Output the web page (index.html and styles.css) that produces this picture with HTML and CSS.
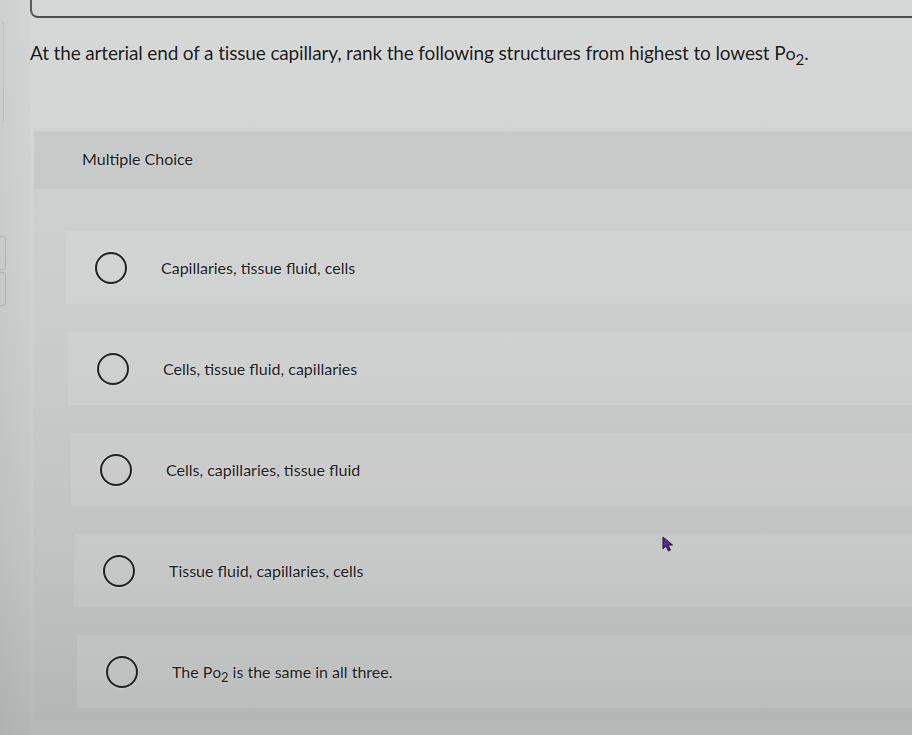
FILE: index.html
```html
<!DOCTYPE html>
<html lang="en">
<head>
<meta charset="utf-8">
<title>Multiple Choice</title>
<link rel="stylesheet" href="styles.css">
</head>
<body>
<div class="screen">
  <div class="side">
    <span class="side-line"></span>
    <span class="side-box"></span>
    <span class="side-box"></span>
  </div>
  <main class="content">
    <div class="topbox"></div>
    <p class="question">At the arterial end of a tissue capillary, rank the following structures from highest to lowest P<span class="po">o</span><sub>2</sub>.</p>
    <section class="panel">
      <div class="panel-head">Multiple Choice</div>
      <div class="options">
        <label class="option o1"><span class="radio"></span><span class="opt-text">Capillaries, tissue fluid, cells</span></label>
        <label class="option o2"><span class="radio"></span><span class="opt-text">Cells, tissue fluid, capillaries</span></label>
        <label class="option o3"><span class="radio"></span><span class="opt-text">Cells, capillaries, tissue fluid</span></label>
        <label class="option o4"><span class="radio"></span><span class="opt-text">Tissue fluid, capillaries, cells</span></label>
        <label class="option o5"><span class="radio"></span><span class="opt-text">The P<span class="po">o</span><sub>2</sub> is the same in all three.</span></label>
      </div>
    </section>
  </main>
  <svg class="cursor" width="14" height="16" viewBox="0 0 14 16" aria-hidden="true">
    <path d="M1 1 L1 13 L4 10 L6.5 15 L8.5 14 L6 9 L10.5 9 Z" fill="#5a2d91" stroke="#1d1230" stroke-width="1"/>
  </svg>
</div>
</body>
</html>
```
FILE: styles.css
```css
html, body {
  margin: 0;
  padding: 0;
}

body {
  width: 912px;
  height: 735px;
  overflow: hidden;
  font-family: Lato, "Open Sans", "Liberation Sans", sans-serif;
  color: #1c1c1c;
  background: linear-gradient(180deg, #d6d8d7 0%, #d0d2d1 40%, #c5c7c6 75%, #b6b7b7 100%);
}

.screen {
  position: relative;
  display: flex;
  height: 735px;
}

.side {
  width: 30px;
  flex: none;
  display: flex;
  flex-direction: column;
  align-items: flex-start;
  padding-top: 22px;
  background: linear-gradient(90deg, rgba(0,0,0,0.04), rgba(0,0,0,0.01));
}

.side-line {
  display: block;
  width: 3px;
  height: 100px;
  border-right: 1px solid rgba(0,0,0,0.08);
  margin-bottom: 114px;
}

.side-box {
  display: block;
  width: 5px;
  height: 32px;
  border: 1px solid rgba(0,0,0,0.12);
  border-left: none;
  border-radius: 0 3px 3px 0;
  margin-bottom: 2px;
}

.content {
  flex: 1;
  min-width: 0;
  display: flex;
  flex-direction: column;
}

.topbox {
  height: 16px;
  margin-right: -20px;
  border-left: 2px solid #5a5b5b;
  border-bottom: 2px solid #4d4e4e;
  border-bottom-left-radius: 8px;
  flex: none;
}

.question {
  margin: 22px 0 0 0;
  font-size: 19px;
  line-height: 26px;
  letter-spacing: -0.15px;
  color: #1a1a1a;
  text-shadow: 0 0 2px rgba(255,255,255,0.6);
}

.po {
  font-size: 0.95em;
}

sub {
  font-size: 0.8em;
  vertical-align: -0.3em;
  line-height: 0;
}

.panel {
  margin: 65px 0 15px 4px;
  flex: 1;
  display: flex;
  flex-direction: column;
  background: rgba(0,0,0,0.015);
}

.panel-head {
  height: 58px;
  box-sizing: border-box;
  padding-bottom: 4px;
  flex: none;
  display: flex;
  align-items: center;
  padding-left: 48px;
  font-size: 16px;
  color: #1c1c1c;
  background: rgba(0,0,0,0.03);
  text-shadow: 0 0 2px rgba(255,255,255,0.6);
}

.options {
  display: flex;
  flex-direction: column;
  gap: 28px;
  padding: 42px 0 10px 32px;
}

.option {
  height: 73px;
  display: flex;
  align-items: center;
  padding-left: 29px;
  background: rgba(255,255,255,0.1);
  font-size: 16px;
  color: #1c1c1c;
  text-shadow: 0 0 2px rgba(255,255,255,0.6);
}

.o2 { margin-left: 2px; }
.o3 { margin-left: 5px; }
.o4 { margin-left: 8px; }
.o5 { margin-left: 11px; }

.radio {
  width: 28px;
  height: 28px;
  flex: none;
  border: 2px solid #222;
  border-radius: 50%;
  margin-right: 34px;
  box-shadow: 0 0 2px rgba(255,255,255,0.7);
}

.opt-text {
  white-space: nowrap;
}

.cursor {
  position: absolute;
  left: 662px;
  top: 536px;
}
```
